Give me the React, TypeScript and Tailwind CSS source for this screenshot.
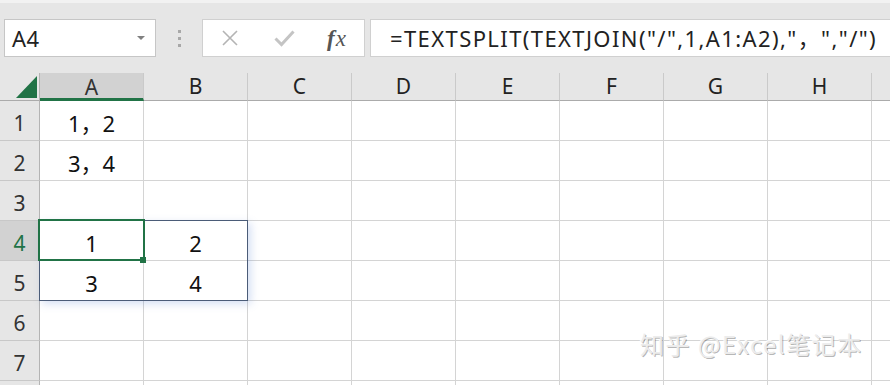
import React from "react";

const cols = ["A", "B", "C", "D", "E", "F", "G", "H", "I"];
const rows = [1, 2, 3, 4, 5, 6, 7, 8];
const data: Record<string, string> = {
  A1: "1，2",
  A2: "3，4",
  A4: "1",
  B4: "2",
  A5: "3",
  B5: "4",
};

const ui = "font-['Noto_Sans','Noto_Sans_CJK_SC',sans-serif]";

export default function App() {
  return (
    <div className={`w-[890px] h-[385px] overflow-hidden bg-[#e6e6e6] relative ${ui}`}>
      <div className="h-[3px] bg-[#f2f2f2]" />
      {/* toolbar */}
      <div className="flex items-start pt-[16px] h-[70px]">
        <div className="ml-[4px] w-[152px] shrink-0 h-[38px] bg-white border border-[#c6c6c6] flex items-center pl-[7px] pr-[10px]">
          <span className="text-[22px] tracking-[0.5px] text-[#222] flex-1 leading-none">A4</span>
          <span className="w-0 h-0 border-l-[4px] border-r-[4px] border-t-[4px] border-l-transparent border-r-transparent border-t-[#808080]" />
        </div>
        <div className="w-[46px] shrink-0 h-[38px] flex flex-col items-center justify-center gap-[4px]">
          <span className="w-[3px] h-[3px] bg-[#a8a8a8]" />
          <span className="w-[3px] h-[3px] bg-[#a8a8a8]" />
          <span className="w-[3px] h-[3px] bg-[#a8a8a8]" />
        </div>
        <div className="w-[163px] shrink-0 h-[38px] bg-white border border-[#d0d0d0] flex items-center">
          <svg className="ml-[18px]" width="18" height="18" viewBox="0 0 18 18">
            <path d="M2 2 L16 16 M16 2 L2 16" stroke="#b4b4b4" strokeWidth="1.6" fill="none" />
          </svg>
          <svg className="ml-[35px]" width="21" height="18" viewBox="0 0 21 18">
            <path d="M1.5 9.5 L7.5 15.5 L19.5 2.5" stroke="#c4c4c4" strokeWidth="3" fill="none" />
          </svg>
          <span className="ml-[32px] text-[23px] italic text-[#555] font-['Liberation_Serif',serif] leading-none tracking-[1px]">
            <span className="font-bold">f</span>x
          </span>
        </div>
        <div className="ml-[5px] w-[540px] shrink-0 h-[38px] bg-white border border-[#d0d0d0] flex items-center pl-[19px]">
          <span className="text-[22px] tracking-[1.4px] text-[#222] leading-none whitespace-nowrap">
            =TEXTSPLIT(TEXTJOIN("/",1,A1:A2),"，","/")
          </span>
        </div>
      </div>

      {/* grid */}
      <div className="relative">
        <div className="flex h-[28px]">
          <div className="w-[40px] shrink-0 border-r border-b border-r-[#b4b4b4] border-b-[#ababab] relative">
            <svg className="absolute left-[16px] top-[3px]" width="21" height="22" viewBox="0 0 21 22">
              <polygon points="21,0 21,22 0,22" fill="#217346" />
            </svg>
          </div>
          {cols.map((c) => (
            <div
              key={c}
              className={`w-[104px] shrink-0 border-r border-r-[#cacaca] flex items-center justify-center text-[21px] leading-none ${
                c === "A"
                  ? "bg-[#d2d2d2] text-[#333] border-b-[3px] border-b-[#217346] pt-[3px]"
                  : "text-[#222] border-b border-b-[#ababab]"
              }`}
            >
              {c === "I" ? "" : c}
            </div>
          ))}
        </div>
        {rows.map((r) => (
          <div key={r} className="flex h-[40px]">
            <div
              className={`w-[40px] shrink-0 border-r border-b border-r-[#b4b4b4] border-b-[#c8c8c8] flex items-center justify-center pt-[6px] text-[21px] leading-none ${
                r === 4 ? "bg-[#d2d2d2] text-[#217346]" : "text-[#333]"
              }`}
            >
              {r < 8 ? r : ""}
            </div>
            {cols.map((c) => (
              <div
                key={c}
                className="w-[104px] shrink-0 bg-white border-r border-b border-[#d4d4d4] flex items-center justify-center pt-[5px] text-[22px] leading-none text-[#111]"
              >
                {data[c + r] ?? ""}
              </div>
            ))}
          </div>
        ))}

        {/* range border A4:B5 */}
        <div className="absolute left-[39px] top-[147px] w-[209px] h-[81px] border border-[#4b5c78] shadow-[3px_3px_8px_rgba(90,130,210,0.25)] pointer-events-none" />
        {/* active cell */}
        <div className="absolute left-[38px] top-[146px] w-[107px] h-[42px] border-2 border-[#217346] pointer-events-none" />
        {/* fill handle */}
        <div className="absolute left-[140px] top-[184px] w-[6px] h-[6px] bg-[#217346] pointer-events-none" />
      </div>

      {/* watermark */}
      <div className="absolute left-[640px] top-[332px] text-[24px] tracking-[1.5px] leading-none whitespace-nowrap text-[#ececec] font-['Noto_Sans_CJK_SC',sans-serif] [text-shadow:1px_1px_0_rgba(0,0,0,0.3),-1px_-1px_0_rgba(255,255,255,0.9)]">
        知乎 @Excel笔记本
      </div>
    </div>
  );
}
